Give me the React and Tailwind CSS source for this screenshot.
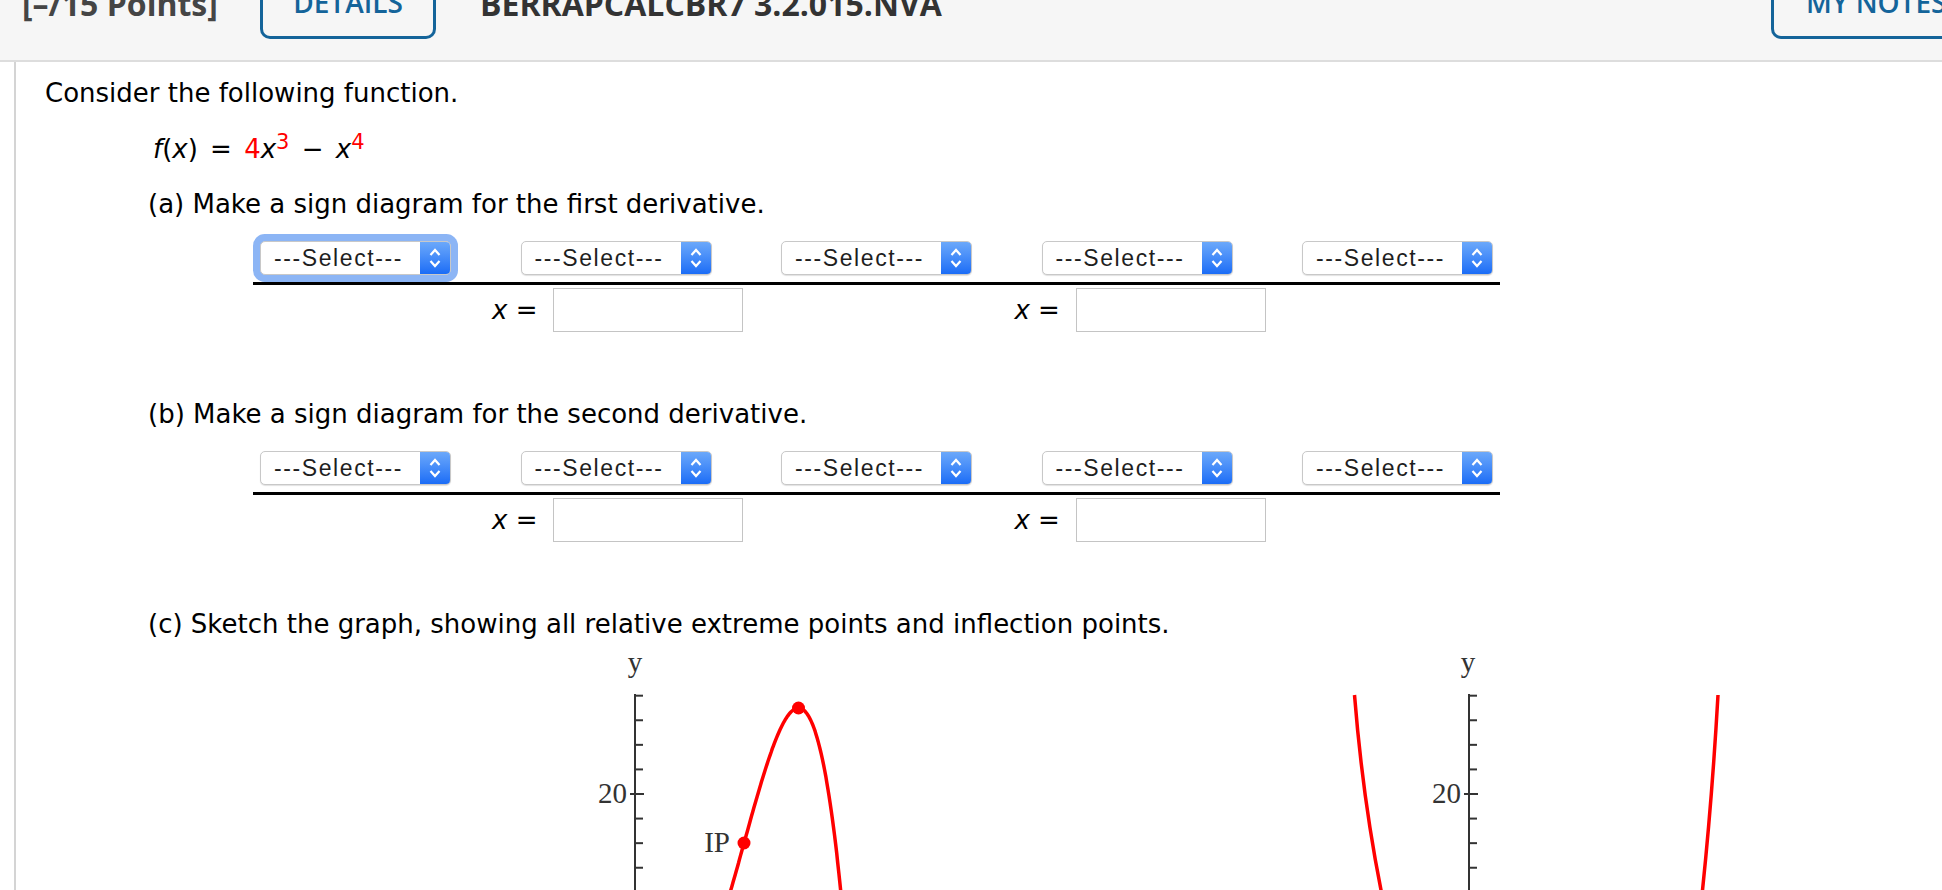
import React from "react";

const f = (x) => 4 * x ** 3 - x ** 4;

// curve for graph 1, svg origin at page (560, 645)
const curvePath = () => {
  const pts = [];
  for (let x = 1.4; x <= 3.96; x += 0.02) {
    const px = 75 + 54.5 * x;
    const py = 149 - 12.29 * (f(x) - 20);
    pts.push(`${px.toFixed(1)},${py.toFixed(1)}`);
  }
  return "M" + pts.join(" L");
};

const ticks = [0, 1, 2, 3, 4, 5, 6, 7, 8].map((k) => 149 - 12.29 * (8 - 2 * k));

const Axis = ({ x }) => (
  <g stroke="#333" strokeWidth="2">
    <line x1={x} y1={49} x2={x} y2={250} />
    {ticks.map((t, i) => (
      <line key={i} x1={i === 4 ? x - 5 : x} y1={t} x2={i === 4 ? x + 9 : x + 8} y2={t} />
    ))}
  </g>
);

const serif = { fontFamily: "'Liberation Serif', serif", fontSize: 29, fill: "#333" };

const Select = ({ focused }) => (
  <div
    className={`flex h-[34px] w-[191px] items-stretch overflow-hidden rounded-[5px] border border-[#c8c8c8] bg-white shadow-[0_1px_1px_rgba(0,0,0,0.12)] ${
      focused ? "ring-[7px] ring-[#8cb5f5]" : ""
    }`}
  >
    <span className="flex flex-1 items-center pl-[13px] font-['Liberation_Sans',sans-serif] text-[23px] tracking-[1.6px] text-[#1e1e1e]">
      ---Select---
    </span>
    <div className="flex w-[30px] items-center justify-center bg-linear-to-b from-[#6ba8fa] to-[#1a6cf6]">
      <svg width="14" height="26" viewBox="0 0 14 26">
        <polyline points="2.5,10 7,5 11.5,10" fill="none" stroke="white" strokeWidth="2.2" />
        <polyline points="2.5,16 7,21 11.5,16" fill="none" stroke="white" strokeWidth="2.2" />
      </svg>
    </div>
  </div>
);

const XInput = () => (
  <div className="flex items-center">
    <span>
      <i>x</i> =
    </span>
    <div className="ml-[16px] h-[44px] w-[190px] border border-[#c4c4c4] bg-white" />
  </div>
);

const SignRow = ({ focusFirst }) => (
  <div className="ml-[208px] w-[1247px]">
    <div className="mt-[22px] flex justify-between px-[7px]">
      <Select focused={focusFirst} />
      <Select />
      <Select />
      <Select />
      <Select />
    </div>
    <div className="mt-[7px] h-[3px] bg-black" />
    <div className="mt-[3px] flex items-center pl-[239px]">
      <XInput />
      <div className="w-[271px]" />
      <XInput />
    </div>
  </div>
);

export default function App() {
  return (
    <div className="h-[890px] w-[1942px] overflow-hidden bg-white">
      <div className="flex h-[62px] items-start overflow-hidden border-b-2 border-[#dddddd] bg-[#f6f6f6] font-['Open_Sans',sans-serif]">
        <div className="ml-[22px] -mt-[12px] w-[238px] shrink-0 text-[32px] font-bold leading-none text-[#454545]">
          [–/15 Points]
        </div>
        <div className="-mt-[20px] h-[59px] w-[176px] shrink-0 rounded-b-[10px] border-[3px] border-t-0 border-[#14649a] pt-[8px] text-center text-[28px] font-semibold leading-none text-[#14649a]">
          DETAILS
        </div>
        <div className="ml-[44px] -mt-[12px] flex-1 text-[32px] font-bold leading-none text-[#333]">
          BERRAPCALCBR7 3.2.015.NVA
        </div>
        <div className="-mr-[40px] -mt-[20px] h-[59px] w-[211px] shrink-0 rounded-b-[10px] border-[3px] border-t-0 border-[#14649a] pl-[32px] pt-[8px] text-[28px] font-semibold leading-none text-[#14649a]">
          MY NOTES
        </div>
      </div>

      <div className="ml-[14px] h-[828px] border-l-2 border-[#d4d4d4] pl-[29px] pt-[16px] font-['DejaVu_Sans',sans-serif] text-[26px] leading-[30px] text-black">
        <p>Consider the following function.</p>
        <p className="ml-[108px] mt-[26px] [word-spacing:4px]">
          <i>f</i>(<i>x</i>) = <span className="text-[#ff0000]">4</span>
          <i>x</i>
          <sup className="relative -top-[9px] text-[21px] text-[#ff0000]">3</sup> − <i>x</i>
          <sup className="relative -top-[9px] text-[21px] text-[#ff0000]">4</sup>
        </p>

        <p className="ml-[103px] mt-[25px]">(a) Make a sign diagram for the first derivative.</p>
        <SignRow focusFirst />

        <p className="ml-[103px] mt-[67px]">(b) Make a sign diagram for the second derivative.</p>
        <SignRow />

        <p className="ml-[103px] mt-[67px]">
          (c) Sketch the graph, showing all relative extreme points and inflection points.
        </p>

        <div className="mt-[6px] flex">
          <svg className="ml-[515px] shrink-0" width="360" height="245">
            <text x="75" y="27" textAnchor="middle" style={serif}>y</text>
            <Axis x={75} />
            <text x="67" y="158" textAnchor="end" style={serif}>20</text>
            <path d={curvePath()} fill="none" stroke="#ff0000" strokeWidth="3.5" />
            <circle cx="238.5" cy="63" r="6.5" fill="#ff0000" />
            <circle cx="184" cy="198" r="6.5" fill="#ff0000" />
            <text x="170" y="207" textAnchor="end" style={serif}>IP</text>
          </svg>
          <svg className="ml-[400px] shrink-0" width="440" height="245">
            <text x="148" y="27" textAnchor="middle" style={serif}>y</text>
            <Axis x={149} />
            <text x="141" y="158" textAnchor="end" style={serif}>20</text>
            <path d="M34.5,50 Q42.9,155.5 62,250" fill="none" stroke="#ff0000" strokeWidth="3.5" />
            <path d="M398,50 Q392,155.5 382,250" fill="none" stroke="#ff0000" strokeWidth="3.5" />
          </svg>
        </div>
      </div>
    </div>
  );
}
